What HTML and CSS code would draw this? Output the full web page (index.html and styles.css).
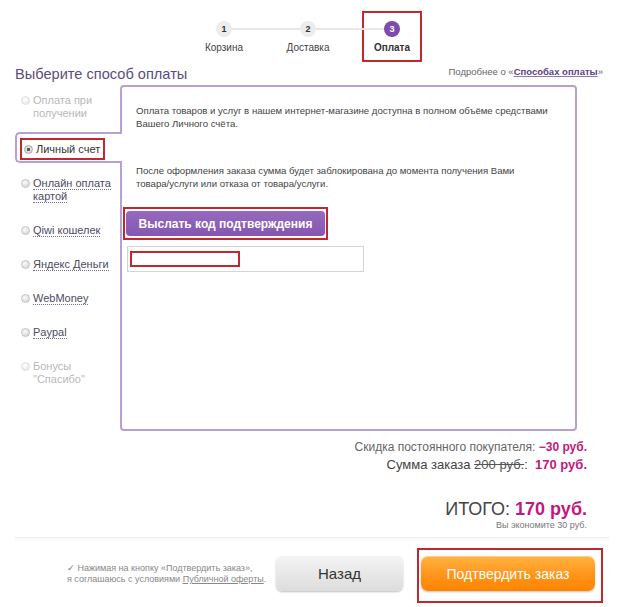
FILE: index.html
```html
<!DOCTYPE html>
<html lang="ru">
<head>
<meta charset="utf-8">
<title>Оплата</title>
<link rel="stylesheet" href="styles.css">
</head>
<body>
<div class="page">
  <div class="stepper">
    <div class="step"><span class="num">1</span><span class="label">Корзина</span></div>
    <div class="step"><span class="num">2</span><span class="label">Доставка</span></div>
    <div class="step step-active"><span class="num">3</span><span class="label">Оплата</span></div>
  </div>

  <div class="head-row">
    <h1 class="title">Выберите способ оплаты</h1>
    <div class="more">Подробнее о «<a class="more-link" href="#">Способах оплаты</a>»</div>
  </div>

  <div class="main">
    <ul class="methods">
      <li class="method method-first disabled"><span class="radio"></span><span class="m-text">Оплата при<br>получении</span></li>
      <li class="method-tab"><div class="sel-box"><span class="radio radio-on"></span><span class="m-text">Личный счет</span></div></li>
      <li class="method method-after"><span class="radio"></span><span class="m-text"><a class="m-link" href="#">Онлайн оплата</a><br><a class="m-link" href="#">картой</a></span></li>
      <li class="method"><span class="radio"></span><span class="m-text"><a class="m-link" href="#">Qiwi кошелек</a></span></li>
      <li class="method"><span class="radio"></span><span class="m-text"><a class="m-link" href="#">Яндекс Деньги</a></span></li>
      <li class="method"><span class="radio"></span><span class="m-text"><a class="m-link" href="#">WebMoney</a></span></li>
      <li class="method"><span class="radio"></span><span class="m-text"><a class="m-link" href="#">Paypal</a></span></li>
      <li class="method disabled"><span class="radio"></span><span class="m-text">Бонусы<br>"Спасибо"</span></li>
    </ul>

    <div class="panel">
      <p class="p1">Оплата товаров и услуг в нашем интернет-магазине доступна в полном объёме средствами<br>Вашего Личного счёта.</p>
      <p class="p2">После оформления заказа сумма будет заблокирована до момента получения Вами<br>товара/услуги или отказа от товара/услуги.</p>
      <div class="hl-btn"><button class="send-btn" type="button">Выслать код подтверждения</button></div>
      <div class="code-input"><div class="hl-input"></div></div>
    </div>
  </div>

  <div class="summary">
    <div class="s-line s-discount">Скидка постоянного покупателя: <b class="accent">−30 руб.</b></div>
    <div class="s-line s-sum">Сумма заказа <s>200 руб.</s>: &nbsp;<b class="accent">170 руб.</b></div>
    <div class="s-total">ИТОГО: <b class="accent">170 руб.</b></div>
    <div class="s-save">Вы экономите 30 руб.</div>
  </div>

  <div class="footer">
    <div class="note"><span class="check">✓</span> Нажимая на кнопку «Подтвердить заказ»,<br>я соглашаюсь с условиями <a class="note-link" href="#">Публичной оферты</a>.</div>
    <button class="back-btn" type="button">Назад</button>
    <div class="hl-confirm"><button class="confirm-btn" type="button">Подтвердить заказ</button></div>
  </div>
</div>
</body>
</html>
```

FILE: styles.css
```css
* { box-sizing: border-box; }
html, body { margin: 0; padding: 0; background: #fff; }
body { font-family: "Liberation Sans", Arial, sans-serif; color: #444; }
.page { width: 624px; height: 607px; overflow: hidden; }

/* stepper */
.stepper { display: flex; gap: 24px; padding: 11px 0 0 194px; height: 62px; }
.step {
  width: 60px; height: 51px; border: 2px solid transparent;
  display: flex; flex-direction: column; align-items: center;
  padding-top: 8px; position: relative;
}
.step + .step::before {
  content: ""; position: absolute; left: -56px; top: 15px;
  width: 84px; height: 2px; background: #e8e8e8;
}
.num {
  position: relative; z-index: 1;
  width: 16px; height: 16px; border-radius: 50%;
  background: #ececec; color: #333; font-size: 9px; font-weight: bold;
  display: flex; align-items: center; justify-content: center;
}
.label { margin-top: 5px; font-size: 10px; line-height: 12px; color: #444; white-space: nowrap; }
.step-active { border-color: #c1272d; }
.step-active .num { background: #7e4bab; color: #fff; }
.step-active .label { font-weight: bold; color: #333; }

/* head row */
.head-row { display: flex; justify-content: space-between; align-items: flex-start; padding: 0 21px 0 15px; margin-top: 2px; height: 20px; }
.title { margin: 0; font-size: 14.6px; line-height: 20px; font-weight: normal; color: #5a4c7c; }
.more { margin-top: 2px; font-size: 9.5px; line-height: 12px; color: #666; white-space: nowrap; }
.more-link { color: #5b3f8c; font-weight: bold; text-decoration: underline; text-decoration-color: #8a7aa8; }

/* main */
.main { display: flex; margin: 1px 0 0 15px; }
.methods { list-style: none; margin: 0; padding: 0; width: 105px; flex: none; }
.method { display: flex; gap: 3px; padding: 10px 0 11px 6px; font-size: 11px; line-height: 13px; color: #555; }
.method-first { padding-top: 9px; padding-bottom: 12px; }
.method-after { margin-top: 4px; }
.m-text { white-space: nowrap; }
.radio {
  flex: none; width: 9px; height: 9px; margin-top: 2px; border-radius: 50%;
  border: 1px solid #c4c4c4;
  background: radial-gradient(circle at 40% 35%, #fafafa 0, #dcdcdc 70%);
}
.disabled { color: #b8b8b8; }
.disabled .radio { border-color: #dedede; background: radial-gradient(circle at 40% 35%, #fff 0, #ececec 70%); }
.m-link { color: #4b4b63; text-decoration: none; border-bottom: 1px dotted #7b6ca0; }

.method-tab {
  position: relative; z-index: 1; margin-right: -2px;
  background: #fff; border: 2px solid #b9a0d1; border-right: none;
  border-radius: 5px 0 0 5px; padding: 4px 0 1px 3px; height: 31px;
}
.sel-box {
  display: flex; gap: 3px; width: 85px; height: 22px; align-items: flex-start;
  border: 2px solid #c1272d; padding: 3px 0 0 2px;
  font-size: 11px; line-height: 13px; color: #333;
}
.radio-on { background: radial-gradient(circle, #555 0, #555 28%, #e6e6e6 34%, #d6d6d6 70%); border-color: #aaa; }

.panel {
  width: 457px; height: 346px; flex: none;
  border: 2px solid #b9a0d1; border-radius: 4px;
  padding: 16px 10px 0 14px;
}
.p1, .p2 { margin: 0; font-size: 9.6px; line-height: 13px; color: #444; white-space: nowrap; }
.p1 { padding-top: 1px; }
.p2 { margin-top: 34px; }
.hl-btn { width: fit-content; margin: 17px 0 0 -13px; border: 2px solid #c1272d; padding: 2px 1px; }
.send-btn {
  display: block; width: 199px; height: 25px; border: none; border-radius: 4px;
  background: linear-gradient(#946abd, #8656b2); color: #fff;
  font-family: "Liberation Sans", Arial, sans-serif; font-size: 12px; font-weight: bold; padding: 0;
}
.code-input { width: 237px; height: 26px; margin: 6px 0 0 -9px; border: 1px solid #d4d4d4; padding: 4px 0 0 2px; }
.hl-input { width: 110px; height: 16px; border: 2px solid #c1272d; }

/* summary */
.summary { padding-right: 37px; text-align: right; }
.accent { color: #c2187c; font-weight: bold; }
.s-line { white-space: nowrap; }
.s-discount { margin-top: 8px; font-size: 12px; line-height: 16px; color: #666; }
.s-sum { margin-top: 2px; font-size: 13px; line-height: 16px; color: #444; }
.s-sum s { color: #555; }
.s-total { margin-top: 25px; font-size: 18px; line-height: 22px; color: #444; }
.s-save { font-size: 9px; line-height: 10px; color: #777; }

/* footer */
.footer {
  display: flex; align-items: flex-start;
  margin: 7px 15px 0 15px; padding-left: 52px;
  border-top: 1px solid #efefef; box-shadow: inset 0 3px 4px -2px rgba(0,0,0,0.05);
  height: 68px;
}
.note { margin-top: 25px; font-size: 9px; line-height: 11px; color: #888; white-space: nowrap; width: 196px; flex: none; }
.check { color: #777; }
.note-link { color: #888; text-decoration: underline; }
.back-btn {
  margin: 18px 0 0 13px; width: 127px; height: 35px; flex: none;
  border: none; border-radius: 6px;
  background: linear-gradient(#f4f4f4, #dcdcdc);
  box-shadow: 0 1px 2px rgba(0,0,0,0.25);
  font-family: "Liberation Sans", Arial, sans-serif; font-size: 15px; color: #333;
}
.hl-confirm { margin: 10px 0 0 14px; border: 2px solid #c1272d; padding: 6px 6px 10px 2px; flex: none; }
.confirm-btn {
  display: block; width: 174px; height: 35px; border: none; border-radius: 7px;
  background: linear-gradient(#ffb443, #ff9419 55%, #ff8400);
  box-shadow: 0 1px 2px rgba(0,0,0,0.25), inset 0 1px 0 rgba(255,255,255,0.4);
  font-family: "Liberation Sans", Arial, sans-serif; font-size: 14px; color: #fff;
}
```
